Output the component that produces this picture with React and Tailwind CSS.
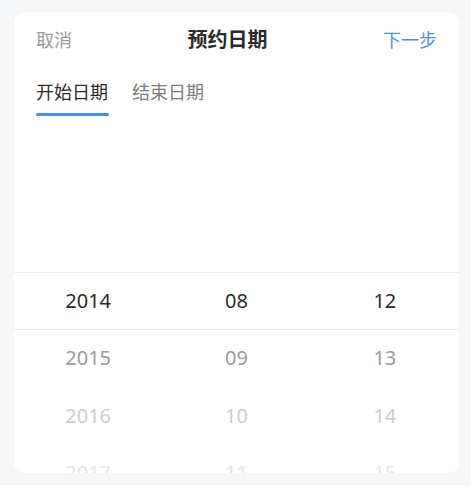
const rows = [
  { y: '2014', m: '08', d: '12', color: 'text-[#2b2b2b]' },
  { y: '2015', m: '09', d: '13', color: 'text-[#9a9a9a]' },
  { y: '2016', m: '10', d: '14', color: 'text-[#cdcdcd]' },
  { y: '2017', m: '11', d: '15', color: 'text-[#e6e6e6]' },
];

const App = () => {
  return (
    <div className="h-[489px] w-[474px] bg-white font-['Noto_Sans','Noto_Sans_CJK_SC',sans-serif]">
      <div className="h-[485px] w-[471px] bg-[#f5f6f8] pt-[12px] pl-[14px]">
        <div className="flex h-[461px] w-[445px] flex-col overflow-hidden rounded-[10px] bg-white">
          {/* header */}
          <div className="flex h-[56px] shrink-0 items-center justify-between px-[22px]">
            <span className="text-[18px] text-[#9b9b9b]">取消</span>
            <span className="text-[20px] font-bold text-[#2b2b2b]">预约日期</span>
            <span className="text-[18px] text-[#4a8ee0]">下一步</span>
          </div>

          {/* tabs */}
          <div className="flex shrink-0 gap-[23px] px-[22px] pt-[12px]">
            <div className="flex flex-col items-start">
              <span className="text-[18px] leading-[24px] text-[#2b2b2b]">开始日期</span>
              <div className="mt-[9px] h-[3px] w-[73px] rounded-full bg-[#4a8ee0]" />
            </div>
            <span className="text-[18px] leading-[24px] text-[#7d7d7d]">结束日期</span>
          </div>

          {/* picker */}
          <div className="mt-[12px] flex-1 overflow-hidden pt-[144px]">
            {rows.map((r, i) => (
              <div
                key={r.y}
                className={`grid h-[57.5px] grid-cols-3 items-center text-center text-[20px] ${r.color} ${
                  i === 0 ? 'border-y border-[#ececec]' : ''
                }`}
              >
                <span>{r.y}</span>
                <span>{r.m}</span>
                <span>{r.d}</span>
              </div>
            ))}
          </div>
        </div>
      </div>
    </div>
  );
};

export default App;
